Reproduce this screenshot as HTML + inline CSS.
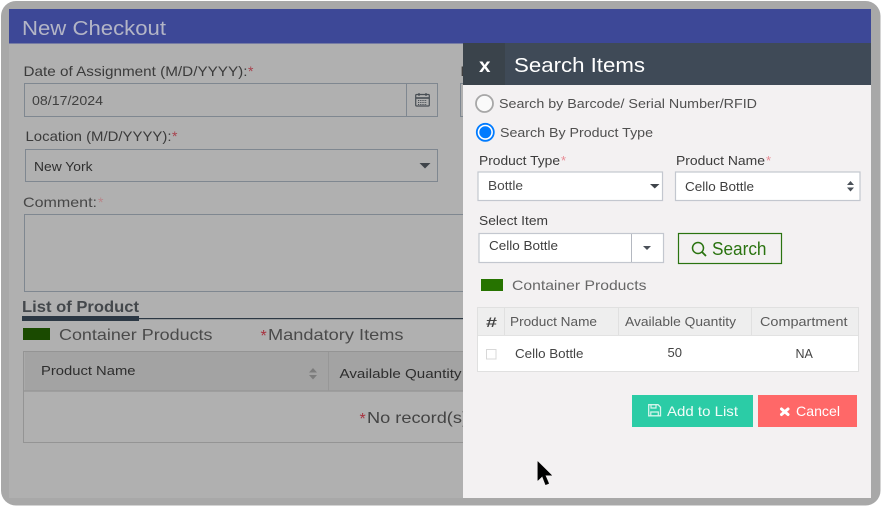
<!DOCTYPE html>
<html><head><meta charset="utf-8"><title>New Checkout</title>
<style>
html,body{margin:0;padding:0;background:#fff;width:881px;height:506px;overflow:hidden}
svg{display:block}
text{font-family:"Liberation Sans",sans-serif;white-space:pre}
</style></head><body>
<svg width="881" height="506" viewBox="0 0 881 506" xmlns="http://www.w3.org/2000/svg">
<rect x="0" y="0" width="881" height="506" fill="#fff"/>
<rect x="1" y="1" width="879.500" height="504.500" rx="15" fill="#a8a8a8"/>
<rect x="9" y="9" width="862" height="489" fill="#b0b0b0"/>
<rect x="9" y="9" width="862" height="34.500" fill="#3d4897"/>
<text x="22" y="35" font-size="20" fill="#b3b5c6" lengthAdjust="spacingAndGlyphs" textLength="144">New Checkout</text>

<!-- left form -->
<g fill="#3b3b3b" font-size="14">
<text x="23.500" y="76" lengthAdjust="spacingAndGlyphs" textLength="224">Date of Assignment (M/D/YYYY):</text>
<text x="25.500" y="141" lengthAdjust="spacingAndGlyphs" textLength="146">Location (M/D/YYYY):</text>
<text x="23" y="207" lengthAdjust="spacingAndGlyphs" textLength="74" fill="#474747">Comment:</text>
</g>
<g fill="#a8424d" font-size="14">
<text x="248" y="76">*</text><text x="172" y="141">*</text><text x="98" y="207" fill="#b8868a">*</text>
</g>
<rect x="24.500" y="83.500" width="413" height="33" fill="none" stroke="#7f8790"/>
<line x1="406.500" y1="84" x2="406.500" y2="116" stroke="#7f8790"/>
<text x="32" y="105" font-size="13" fill="#3f3f3f" lengthAdjust="spacingAndGlyphs" textLength="71">08/17/2024</text>
<g fill="none" stroke="#484e54" stroke-width="1.200">
<rect x="415.700" y="94.500" width="13.600" height="11.500" rx="1"/>
<path d="M419 93v3M426 93v3"/>
<path d="M416 98h13" stroke-width="1.600"/>
<path d="M418 100.500h9M418 102.500h9M418 104.500h9" stroke-dasharray="1 .8" stroke-width="1"/>
</g>
<rect x="25.500" y="149.500" width="412" height="32" fill="none" stroke="#7f8790"/>
<text x="34" y="171" font-size="13" fill="#2f2f2f" lengthAdjust="spacingAndGlyphs" textLength="58.500">New York</text>
<path d="M419.500 163h11l-5.500 5.500z" fill="#3f444a"/>
<rect x="24.500" y="214.500" width="440" height="77" fill="none" stroke="#7f8790"/>
<text x="22" y="312" font-size="15.500" font-weight="bold" fill="#44484c" lengthAdjust="spacingAndGlyphs" textLength="117">List of Product</text>
<rect x="22" y="318" width="441" height="1.200" fill="#2c3844"/>
<rect x="22" y="316" width="117" height="5" fill="#2c3844"/>
<rect x="23" y="328" width="27" height="12" fill="#1a4a00"/>
<text x="59" y="340" font-size="16" fill="#4a4a4a" lengthAdjust="spacingAndGlyphs" textLength="153.500">Container Products</text>
<text x="260.500" y="341" font-size="16" fill="#a8323f">*</text>
<text x="268" y="340" font-size="16" fill="#4a4a4a" lengthAdjust="spacingAndGlyphs" textLength="135.500">Mandatory Items</text>
<rect x="23.500" y="351.500" width="445" height="91" fill="none" stroke="#949494"/>
<rect x="24.500" y="352" width="440" height="39" fill="#a3a3a3"/>
<path d="M24 391h440" stroke="#979797" stroke-width="1.500"/>
<path d="M328.500 352v39" stroke="#979797" stroke-width="1"/>
<text x="41" y="375" font-size="13" fill="#2e2e2e" lengthAdjust="spacingAndGlyphs" textLength="94.500">Product Name</text>
<path d="M313 368l4 4.500h-8zM313 379.500l4-4.500h-8z" fill="#7c7c7c"/>
<text x="339.500" y="378" font-size="13" fill="#2e2e2e" lengthAdjust="spacingAndGlyphs" textLength="122">Available Quantity</text>
<text x="359.500" y="424" font-size="16" fill="#a8323f">*</text>
<text x="367" y="423" font-size="16" fill="#444" lengthAdjust="spacingAndGlyphs" textLength="101">No record(s)</text>
<text x="460.500" y="76" font-size="14" fill="#3b3b3b">D</text>
<rect x="460.500" y="83.500" width="20" height="33" fill="none" stroke="#7f8790"/>

<!-- panel -->
<rect x="463" y="43" width="408" height="455" fill="#f3f1f2"/>
<rect x="463" y="43" width="408" height="42" fill="#3f4a57"/>
<rect x="463" y="43" width="42" height="42" fill="#3a434b"/>
<text x="479" y="72" font-size="19" font-weight="bold" fill="#fff" lengthAdjust="spacingAndGlyphs" textLength="11.500">x</text>
<text x="514" y="72" font-size="20" fill="#fff" lengthAdjust="spacingAndGlyphs" textLength="131">Search Items</text>

<circle cx="484.500" cy="103.500" r="8.500" fill="#fafafa" stroke="#a7a7a7" stroke-width="1.800"/>
<text x="499" y="108" font-size="13" fill="#505050" lengthAdjust="spacingAndGlyphs" textLength="258">Search by Barcode/ Serial Number/RFID</text>
<circle cx="485.300" cy="132.300" r="8.500" fill="#fff" stroke="#007bff" stroke-width="1.800"/>
<circle cx="485.300" cy="132.300" r="6" fill="#007bff"/>
<text x="500" y="137" font-size="13" fill="#505050" lengthAdjust="spacingAndGlyphs" textLength="153">Search By Product Type</text>

<text x="479" y="165" font-size="13" fill="#3c3c3c" lengthAdjust="spacingAndGlyphs" textLength="81">Product Type</text>
<text x="561" y="165" font-size="13" fill="#e88a94">*</text>
<text x="676" y="165" font-size="13" fill="#3c3c3c" lengthAdjust="spacingAndGlyphs" textLength="89">Product Name</text>
<text x="766" y="165" font-size="13" fill="#e88a94">*</text>
<rect x="478" y="172" width="184.500" height="28.500" fill="#fff" stroke="#c3c7cf" stroke-width="1.200"/>
<text x="488" y="190" font-size="12.500" fill="#4a4a4a" lengthAdjust="spacingAndGlyphs" textLength="35">Bottle</text>
<path d="M650 184h9.500l-4.750 4.500z" fill="#3f444a"/>
<rect x="675.500" y="172" width="184.500" height="28.500" fill="#fff" stroke="#c3c7cf" stroke-width="1.200"/>
<text x="685" y="191" font-size="12.500" fill="#3f3f3f" lengthAdjust="spacingAndGlyphs" textLength="69">Cello Bottle</text>
<path d="M850.500 181l3.500 4h-7zM850.500 191.500l3.500-4h-7z" fill="#4a5058"/>

<text x="479" y="225" font-size="13" fill="#3c3c3c" lengthAdjust="spacingAndGlyphs" textLength="69">Select Item</text>
<rect x="479" y="233.500" width="184.500" height="29" fill="#fff" stroke="#c3c7cf" stroke-width="1.200"/>
<line x1="631.500" y1="234" x2="631.500" y2="262" stroke="#b4b8c0"/>
<text x="489" y="250" font-size="12.500" fill="#3f3f3f" lengthAdjust="spacingAndGlyphs" textLength="69">Cello Bottle</text>
<path d="M643 246h8l-4 4z" fill="#4a5058"/>
<rect x="678.500" y="233.500" width="103" height="30" fill="none" stroke="#2a7310" stroke-width="1.200"/>
<circle cx="698" cy="248" r="5.500" fill="none" stroke="#2a7310" stroke-width="1.500"/>
<path d="M702 252l4 4" stroke="#2a7310" stroke-width="1.800"/>
<text x="712" y="255" font-size="18" fill="#2a7310" lengthAdjust="spacingAndGlyphs" textLength="54.500">Search</text>

<rect x="481" y="279" width="22" height="12" fill="#267300"/>
<text x="512" y="290" font-size="14" fill="#676767" lengthAdjust="spacingAndGlyphs" textLength="134.500">Container Products</text>

<rect x="477.500" y="307.500" width="381" height="64" fill="#fff" stroke="#e0e0e0"/>
<rect x="478" y="308" width="380" height="27.500" fill="#eeeeee"/>
<path d="M478 335.500h380" stroke="#e2e2e2"/>
<path d="M504.500 308v27M618.500 308v27M751.500 308v27" stroke="#e0e0e0"/>
<text x="486" y="327" font-size="14" font-weight="bold" fill="#444" lengthAdjust="spacingAndGlyphs" textLength="11">#</text>
<g font-size="12.500" fill="#5a5a5a">
<text x="510" y="326" lengthAdjust="spacingAndGlyphs" textLength="87">Product Name</text>
<text x="625" y="326" lengthAdjust="spacingAndGlyphs" textLength="111">Available Quantity</text>
<text x="760" y="326" lengthAdjust="spacingAndGlyphs" textLength="87.500">Compartment</text>
<text x="515" y="358" fill="#444" lengthAdjust="spacingAndGlyphs" textLength="68.500">Cello Bottle</text>
<text x="667.500" y="357" fill="#444" lengthAdjust="spacingAndGlyphs" textLength="14.500">50</text>
<text x="795.500" y="358" fill="#444">NA</text>
</g>
<rect x="486.500" y="349.500" width="9.500" height="9.500" fill="#fff" stroke="#d8d8d8"/>

<rect x="632" y="395" width="121" height="32" fill="#2bcca6"/>
<rect x="758" y="395" width="99" height="32" fill="#ff6868"/>
<path d="M648.700 404.700h9.300l2.500 2.500v8.600h-11.800z" fill="none" stroke="#d6f5ec" stroke-width="1.300"/>
<path d="M651 405v3h5v-3M650.800 415.500v-3.500h7.500v3.500" fill="none" stroke="#d6f5ec" stroke-width="1.200"/>
<text x="667" y="416" font-size="14" fill="#f2fbf8" lengthAdjust="spacingAndGlyphs" textLength="71">Add to List</text>
<path d="M781.500 409l6.500 5.500M788 409l-6.500 5.500" stroke="#fff" stroke-width="3" stroke-linecap="round"/>
<text x="796" y="416" font-size="14" fill="#fff" lengthAdjust="spacingAndGlyphs" textLength="44">Cancel</text>

<path d="M537.800 461.500v19l4.500-4.200 3.300 8.500 3.200-1.300-3.500-8.200h6.500z" fill="#000" stroke="#111" stroke-width=".5"/>
</svg>
</body></html>
